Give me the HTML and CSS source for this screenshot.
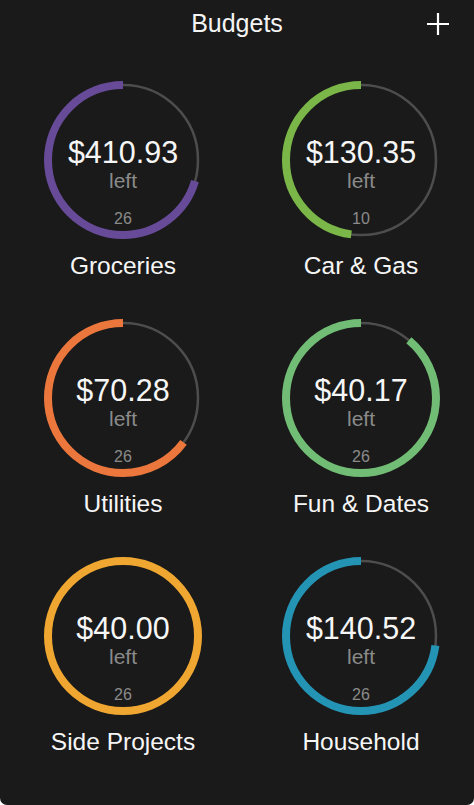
FILE: index.html
```html
<!DOCTYPE html>
<html lang="en">
<head>
  <meta charset="UTF-8" />
  <meta name="viewport" content="width=device-width, initial-scale=1">
  <title>Budgets</title>
  <link rel="stylesheet" href="styles.css">
</head>
<body>

  <div id="app">
    <div id="header">
      <div></div>
      <h1 id="title">Budgets</h1>
      <button id="addBtn" aria-label="Add budget">
        <svg width="24" height="24" viewBox="0 0 24 24">
          <path d="M12 1v22M1 12h22" stroke="#fff" stroke-width="2.2" fill="none"/>
        </svg>
      </button>
    </div>

    <div id="budgets">

      <div class="budget">
        <div class="ring">
          <svg width="160" height="160" viewBox="0 0 160 160">
            <circle class="track" cx="80" cy="80" r="75"/>
            <circle class="arc" cx="80" cy="80" r="75" transform="rotate(-90 80 80)"
                    stroke="#674b98" stroke-dasharray="332.2 471.24" stroke-dashoffset="-139.04"/>
          </svg>
          <div class="ring-text">
            <div class="amount">$410.93</div>
            <div class="left">left</div>
            <div class="days">26</div>
          </div>
        </div>
        <div class="name">Groceries</div>
      </div>

      <div class="budget">
        <div class="ring">
          <svg width="160" height="160" viewBox="0 0 160 160">
            <circle class="track" cx="80" cy="80" r="75"/>
            <circle class="arc" cx="80" cy="80" r="75" transform="rotate(-90 80 80)"
                    stroke="#7ab648" stroke-dasharray="226.2 471.24" stroke-dashoffset="-245.04"/>
          </svg>
          <div class="ring-text">
            <div class="amount">$130.35</div>
            <div class="left">left</div>
            <div class="days">10</div>
          </div>
        </div>
        <div class="name">Car &amp; Gas</div>
      </div>

      <div class="budget">
        <div class="ring">
          <svg width="160" height="160" viewBox="0 0 160 160">
            <circle class="track" cx="80" cy="80" r="75"/>
            <circle class="arc" cx="80" cy="80" r="75" transform="rotate(-90 80 80)"
                    stroke="#ec773d" stroke-dasharray="306.3 471.24" stroke-dashoffset="-164.94"/>
          </svg>
          <div class="ring-text">
            <div class="amount">$70.28</div>
            <div class="left">left</div>
            <div class="days">26</div>
          </div>
        </div>
        <div class="name">Utilities</div>
      </div>

      <div class="budget">
        <div class="ring">
          <svg width="160" height="160" viewBox="0 0 160 160">
            <circle class="track" cx="80" cy="80" r="75"/>
            <circle class="arc" cx="80" cy="80" r="75" transform="rotate(-90 80 80)"
                    stroke="#72bd76" stroke-dasharray="419.4 471.24" stroke-dashoffset="-51.84"/>
          </svg>
          <div class="ring-text">
            <div class="amount">$40.17</div>
            <div class="left">left</div>
            <div class="days">26</div>
          </div>
        </div>
        <div class="name">Fun &amp; Dates</div>
      </div>

      <div class="budget">
        <div class="ring">
          <svg width="160" height="160" viewBox="0 0 160 160">
            <circle class="track" cx="80" cy="80" r="75"/>
            <circle class="arc" cx="80" cy="80" r="75" stroke="#efa731"/>
          </svg>
          <div class="ring-text">
            <div class="amount">$40.00</div>
            <div class="left">left</div>
            <div class="days">26</div>
          </div>
        </div>
        <div class="name">Side Projects</div>
      </div>

      <div class="budget">
        <div class="ring">
          <svg width="160" height="160" viewBox="0 0 160 160">
            <circle class="track" cx="80" cy="80" r="75"/>
            <circle class="arc" cx="80" cy="80" r="75" transform="rotate(-90 80 80)"
                    stroke="#2494b5" stroke-dasharray="344.0 471.24" stroke-dashoffset="-127.24"/>
          </svg>
          <div class="ring-text">
            <div class="amount">$140.52</div>
            <div class="left">left</div>
            <div class="days">26</div>
          </div>
        </div>
        <div class="name">Household</div>
      </div>

    </div>
  </div>

</body>
</html>
```

FILE: styles.css
```css
html, body {
  margin: 0;
  padding: 0;
  background: #fff;
  font-family: "Liberation Sans", Arial, sans-serif;
}

#app {
  height: 805px;
  background: #1a1a1a;
  border-radius: 0 0 7px 7px;
  overflow: hidden;
  color: #f4f4f4;
}

#header {
  display: grid;
  grid-template-columns: 1fr auto 1fr;
  align-items: center;
  height: 46px;
  padding: 0 24px;
}

#title {
  margin: 0;
  font-size: 25px;
  font-weight: 400;
  line-height: 30px;
}

#addBtn {
  justify-self: end;
  width: 24px;
  height: 24px;
  padding: 0;
  margin-top: 2px;
  border: none;
  background: none;
  cursor: pointer;
}

#addBtn svg {
  display: block;
}

#budgets {
  display: grid;
  grid-template-columns: 226px 226px;
  column-gap: 12px;
  row-gap: 38px;
  padding: 34px 0 0 10px;
}

.budget {
  display: flex;
  flex-direction: column;
  align-items: center;
}

.ring {
  display: grid;
  width: 160px;
  height: 160px;
}

.ring svg,
.ring-text {
  grid-area: 1 / 1;
}

.track {
  fill: none;
  stroke: #4d4d4d;
  stroke-width: 2.5;
}

.arc {
  fill: none;
  stroke-width: 8;
}

.ring-text {
  display: flex;
  flex-direction: column;
  align-items: center;
  padding-top: 56px;
}

.amount {
  font-size: 30.5px;
  line-height: 33px;
  color: #f6f6f6;
}

.left {
  font-size: 21px;
  line-height: 24px;
  color: #8a8a8a;
}

.days {
  margin-top: 17px;
  font-size: 16px;
  line-height: 18px;
  color: #8a8a8a;
}

.name {
  margin-top: 12px;
  font-size: 24.5px;
  line-height: 28px;
  color: #f6f6f6;
}
```
